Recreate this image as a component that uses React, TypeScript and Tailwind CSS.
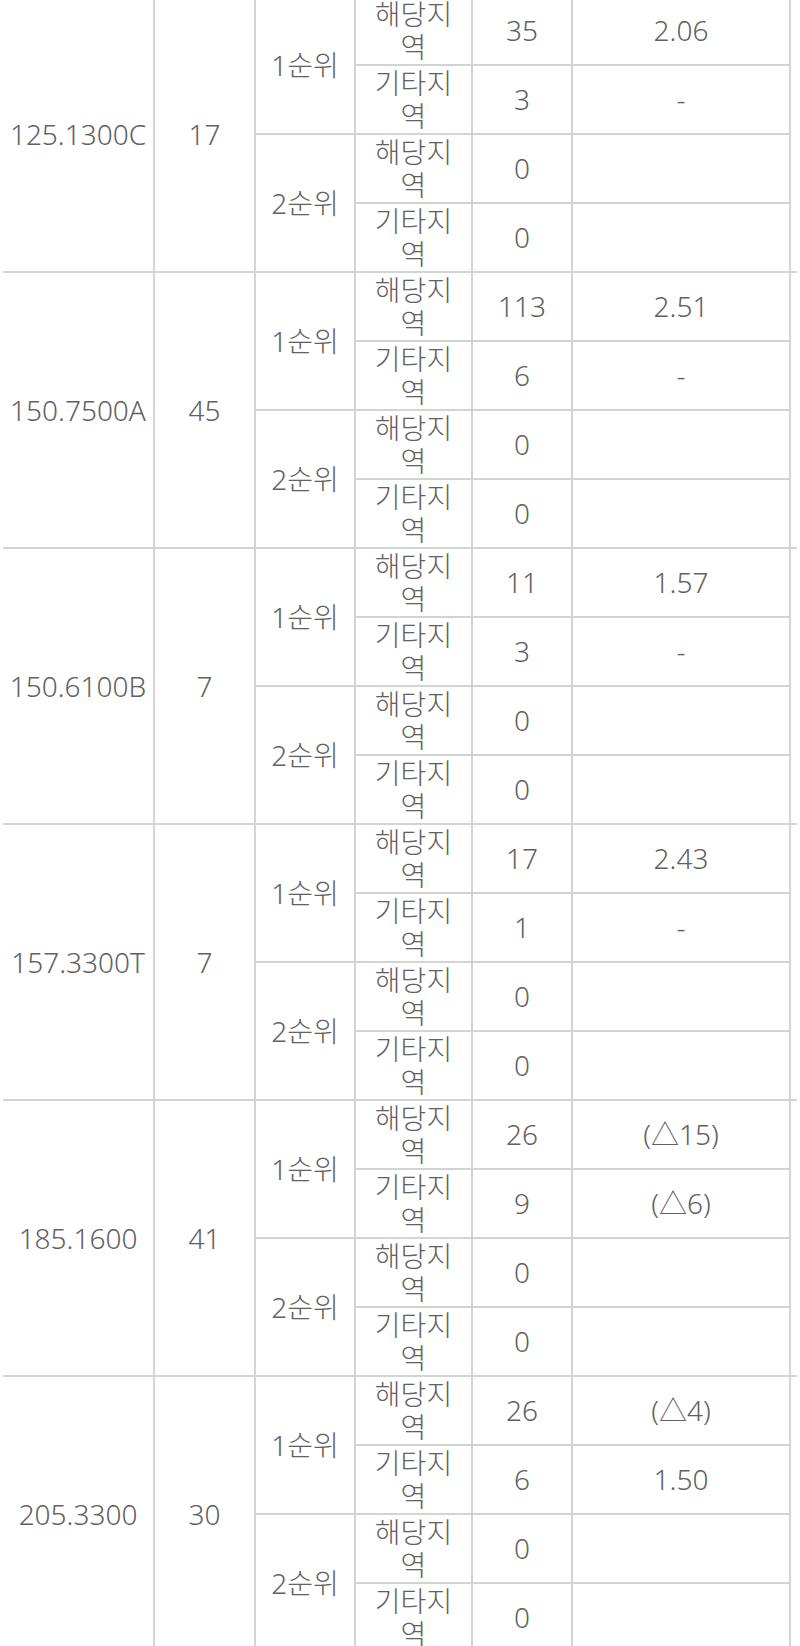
import React from "react";

type Sub = { region: string; count: string; value: string };
type Group = { code: string; total: string; ranks: { label: string; subs: Sub[] }[] };

const mk = (a: string, av: string, b: string, bv: string): { label: string; subs: Sub[] }[] => [
  {
    label: "1순위",
    subs: [
      { region: "해당지역", count: a, value: av },
      { region: "기타지역", count: b, value: bv },
    ],
  },
  {
    label: "2순위",
    subs: [
      { region: "해당지역", count: "0", value: "" },
      { region: "기타지역", count: "0", value: "" },
    ],
  },
];

const groups: Group[] = [
  { code: "125.1300C", total: "17", ranks: mk("35", "2.06", "3", "-") },
  { code: "150.7500A", total: "45", ranks: mk("113", "2.51", "6", "-") },
  { code: "150.6100B", total: "7", ranks: mk("11", "1.57", "3", "-") },
  { code: "157.3300T", total: "7", ranks: mk("17", "2.43", "1", "-") },
  { code: "185.1600", total: "41", ranks: mk("26", "(△15)", "9", "(△6)") },
  { code: "205.3300", total: "30", ranks: mk("26", "(△4)", "6", "1.50") },
];

export default function App() {
  return (
    <div
      className="w-[800px] bg-white text-[#616161] text-[28px] leading-[33px] font-light overflow-hidden"
      style={{ fontFamily: '"Noto Sans", "Noto Sans CJK KR", sans-serif' }}
    >
      <div className="mt-[-3px] ml-[3px] w-[794px]">
        {groups.map((g, gi) => (
          <div key={gi} className="flex border-b-2 border-[#d3d3d3]">
            <div className="w-[152px] shrink-0 border-r-2 border-[#d3d3d3] flex items-center justify-center">
              {g.code}
            </div>
            <div className="w-[101px] shrink-0 border-r-2 border-[#d3d3d3] flex items-center justify-center">
              {g.total}
            </div>
            <div className="flex flex-col">
              {g.ranks.map((r, ri) => (
                <div
                  key={ri}
                  className={ri === 0 ? "flex border-b-2 border-[#d3d3d3]" : "flex"}
                >
                  <div className="w-[100px] shrink-0 border-r-2 border-[#d3d3d3] flex items-center justify-center">
                    {r.label}
                  </div>
                  <div className="flex flex-col">
                    {r.subs.map((s, si) => (
                      <div
                        key={si}
                        className={
                          si === 0
                            ? "flex h-[69px] border-b-2 border-[#d3d3d3]"
                            : "flex h-[67px]"
                        }
                      >
                        <div className="w-[117px] shrink-0 border-r-2 border-[#d3d3d3] px-[8px] flex items-center justify-center text-center">
                          {s.region}
                        </div>
                        <div className="w-[100px] shrink-0 border-r-2 border-[#d3d3d3] flex items-center justify-center">
                          {s.count}
                        </div>
                        <div className="w-[218px] shrink-0 border-r-2 border-[#d3d3d3] flex items-center justify-center">
                          {s.value}
                        </div>
                      </div>
                    ))}
                  </div>
                </div>
              ))}
            </div>
          </div>
        ))}
      </div>
    </div>
  );
}
